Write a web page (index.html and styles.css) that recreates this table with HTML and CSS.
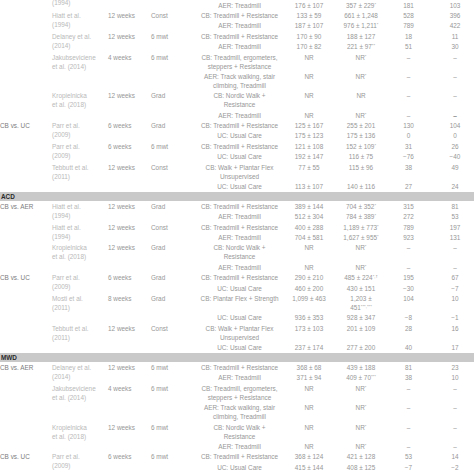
FILE: index.html
```html
<!DOCTYPE html>
<html>
<head>
<meta charset="utf-8">
<link rel="stylesheet" href="styles.css">
</head>
<body>
<div class="page">
<div class="t">
  <div class="cm"></div><div class="st0">(1994)</div><div></div><div></div><div class="tx">AER: Treadmill</div><div class="n">176 ± 107</div><div class="n">357 ± 229<sup>*</sup></div><div class="n">181</div><div class="n">103</div>

  <div class="cm"></div><div class="st">Hiatt et al.<br>(1994)</div><div class="du">12 weeks</div><div class="pr">Const</div><div class="tx">CB: Treadmill + Resistance</div><div class="n">133 ± 59</div><div class="n">661 ± 1,248</div><div class="n">528</div><div class="n">396</div>
  <div class="cm"></div><div class="tx">AER: Treadmill</div><div class="n">187 ± 107</div><div class="n">976 ± 1,211<sup>*</sup></div><div class="n">789</div><div class="n">422</div>

  <div class="cm"></div><div class="st">Delaney et al.<br>(2014)</div><div class="du">12 weeks</div><div class="pr">6 mwt</div><div class="tx">CB: Treadmill + Resistance</div><div class="n">170 ± 90</div><div class="n">188 ± 127</div><div class="n">18</div><div class="n">11</div>
  <div class="cm"></div><div class="tx">AER: Treadmill</div><div class="n">170 ± 82</div><div class="n">221 ± 97<sup>**</sup></div><div class="n">51</div><div class="n">30</div>

  <div class="cm"></div><div class="st">Jakubseviciene<br>et al. (2014)</div><div class="du">4 weeks</div><div class="pr">6 mwt</div><div class="tx">CB: Treadmill, ergometers,<br>steppers + Resistance</div><div class="n">NR</div><div class="n">NR<sup>*</sup></div><div class="n">–</div><div class="n">–</div>
  <div class="cm"></div><div class="tx">AER: Track walking, stair<br>climbing, Treadmill</div><div class="n">NR</div><div class="n">NR<sup>*</sup></div><div class="n">–</div><div class="n">–</div>

  <div class="cm"></div><div class="st">Kropielnicka<br>et al. (2018)</div><div class="du">12 weeks</div><div class="pr">Grad</div><div class="tx">CB: Nordic Walk +<br>Resistance</div><div class="n">NR</div><div class="n">NR</div><div class="n">–</div><div class="n">–</div>
  <div class="cm"></div><div class="tx">AER: Treadmill</div><div class="n">NR</div><div class="n">NR<sup>*</sup></div><div class="n">–</div><div class="n dk">–</div>

  <div class="cm">CB vs. UC</div><div class="st">Parr et al.<br>(2009)</div><div class="du">6 weeks</div><div class="pr">Grad</div><div class="tx">CB: Treadmill + Resistance</div><div class="n">125 ± 167</div><div class="n">255 ± 201</div><div class="n">130</div><div class="n">104</div>
  <div class="cm"></div><div class="tx">UC: Usual Care</div><div class="n">175 ± 123</div><div class="n">175 ± 136</div><div class="n">0</div><div class="n">0</div>

  <div class="cm"></div><div class="st">Parr et al.<br>(2009)</div><div class="du">6 weeks</div><div class="pr">6 mwt</div><div class="tx">CB: Treadmill + Resistance</div><div class="n">121 ± 108</div><div class="n">152 ± 109<sup>*</sup></div><div class="n">31</div><div class="n">26</div>
  <div class="cm"></div><div class="tx">UC: Usual Care</div><div class="n">192 ± 147</div><div class="n">116 ± 75</div><div class="n">−76</div><div class="n">−40</div>

  <div class="cm"></div><div class="st">Tebbutt et al.<br>(2011)</div><div class="du">12 weeks</div><div class="pr">Const</div><div class="tx">CB: Walk + Plantar Flex<br>Unsupervised</div><div class="n">77 ± 55</div><div class="n">115 ± 96</div><div class="n">38</div><div class="n">49</div>
  <div class="cm"></div><div class="tx">UC: Usual Care</div><div class="n">113 ± 107</div><div class="n">140 ± 116</div><div class="n">27</div><div class="n">24</div>

  <div class="sec">ACD</div>

  <div class="cm">CB vs. AER</div><div class="st">Hiatt et al.<br>(1994)</div><div class="du">12 weeks</div><div class="pr">Grad</div><div class="tx">CB: Treadmill + Resistance</div><div class="n">389 ± 144</div><div class="n">704 ± 352<sup>*</sup></div><div class="n">315</div><div class="n">81</div>
  <div class="cm"></div><div class="tx">AER: Treadmill</div><div class="n">512 ± 304</div><div class="n">784 ± 389<sup>*</sup></div><div class="n">272</div><div class="n">53</div>

  <div class="cm"></div><div class="st">Hiatt et al.<br>(1994)</div><div class="du">12 weeks</div><div class="pr">Const</div><div class="tx">CB: Treadmill + Resistance</div><div class="n">400 ± 288</div><div class="n">1,189 ± 773<sup>*</sup></div><div class="n">789</div><div class="n">197</div>
  <div class="cm"></div><div class="tx">AER: Treadmill</div><div class="n">704 ± 581</div><div class="n">1,627 ± 955<sup>*</sup></div><div class="n">923</div><div class="n">131</div>

  <div class="cm"></div><div class="st">Kropielnicka<br>et al. (2018)</div><div class="du">12 weeks</div><div class="pr">Grad</div><div class="tx">CB: Nordic Walk +<br>Resistance</div><div class="n">NR</div><div class="n">NR<sup>*</sup></div><div class="n">–</div><div class="n">–</div>
  <div class="cm"></div><div class="tx">AER: Treadmill</div><div class="n">NR</div><div class="n">NR<sup>*</sup></div><div class="n">–</div><div class="n">–</div>

  <div class="cm">CB vs. UC</div><div class="st">Parr et al.<br>(2009)</div><div class="du">6 weeks</div><div class="pr">Grad</div><div class="tx">CB: Treadmill + Resistance</div><div class="n">290 ± 210</div><div class="n">485 ± 224<sup>*,†</sup></div><div class="n">195</div><div class="n">67</div>
  <div class="cm"></div><div class="tx">UC: Usual Care</div><div class="n">460 ± 200</div><div class="n">430 ± 151</div><div class="n">−30</div><div class="n">−7</div>

  <div class="cm"></div><div class="st">Mosti et al.<br>(2011)</div><div class="du">8 weeks</div><div class="pr">Grad</div><div class="tx">CB: Plantar Flex + Strength</div><div class="n">1,099 ± 463</div><div class="n">1,203 ±<br>451<sup>***,***</sup></div><div class="n">104</div><div class="n">10</div>
  <div class="cm"></div><div class="tx">UC: Usual Care</div><div class="n">936 ± 353</div><div class="n">928 ± 347</div><div class="n">−8</div><div class="n">−1</div>

  <div class="cm"></div><div class="st">Tebbutt et al.<br>(2011)</div><div class="du">12 weeks</div><div class="pr">Const</div><div class="tx">CB: Walk + Plantar Flex<br>Unsupervised</div><div class="n">173 ± 103</div><div class="n">201 ± 109</div><div class="n">28</div><div class="n">16</div>
  <div class="cm"></div><div class="tx">UC: Usual Care</div><div class="n">237 ± 174</div><div class="n">277 ± 200</div><div class="n">40</div><div class="n">17</div>

  <div class="sec">MWD</div>

  <div class="cm">CB vs. AER</div><div class="st">Delaney et al.<br>(2014)</div><div class="du">12 weeks</div><div class="pr">6 mwt</div><div class="tx">CB: Treadmill + Resistance</div><div class="n">368 ± 68</div><div class="n">439 ± 188</div><div class="n">81</div><div class="n">23</div>
  <div class="cm"></div><div class="tx">AER: Treadmill</div><div class="n">371 ± 94</div><div class="n">409 ± 70<sup>***</sup></div><div class="n">38</div><div class="n">10</div>

  <div class="cm"></div><div class="st">Jakubseviciene<br>et al. (2014)</div><div class="du">4 weeks</div><div class="pr">6 mwt</div><div class="tx">CB: Treadmill, ergometers,<br>steppers + Resistance</div><div class="n">NR</div><div class="n">NR<sup>*</sup></div><div class="n">–</div><div class="n">–</div>
  <div class="cm"></div><div class="tx">AER: Track walking, stair<br>climbing, Treadmill</div><div class="n">NR</div><div class="n">NR<sup>*</sup></div><div class="n">–</div><div class="n">–</div>

  <div class="cm"></div><div class="st">Kropielnicka<br>et al. (2018)</div><div class="du">12 weeks</div><div class="pr">6 mwt</div><div class="tx">CB: Nordic Walk +<br>Resistance</div><div class="n">NR</div><div class="n">NR<sup>*</sup></div><div class="n">–</div><div class="n">–</div>
  <div class="cm"></div><div class="tx">AER: Treadmill</div><div class="n">NR</div><div class="n">NR<sup>*</sup></div><div class="n">–</div><div class="n">–</div>

  <div class="cm">CB vs. UC</div><div class="st">Parr et al.<br>(2009)</div><div class="du">6 weeks</div><div class="pr">6 mwt</div><div class="tx">CB: Treadmill + Resistance</div><div class="n">368 ± 124</div><div class="n">421 ± 128</div><div class="n">53</div><div class="n">14</div>
  <div class="cm"></div><div class="tx">UC: Usual Care</div><div class="n">415 ± 144</div><div class="n">408 ± 125</div><div class="n">−7</div><div class="n">−2</div>
</div>
</div>
</body>
</html>
```

FILE: styles.css
```css
html, body {
  margin: 0;
  padding: 0;
  background: #ffffff;
  overflow: hidden;
}

.page {
  width: 474px;
  height: 474px;
  overflow: hidden;
}

.t {
  display: grid;
  grid-template-columns: 52px 56px 43px 45px 87px 52px 52px 43px 50px;
  width: 480px;
  font-family: "Liberation Sans", Arial, sans-serif;
  font-size: 6.4px;
  line-height: 9px;
  color: #979797;
}

.t > div {
  padding: 0.7px 0;
  white-space: nowrap;
}

.cm {
  color: #7c7c7c;
}

.st {
  grid-row: span 2;
  color: #b9b9b9;
}

.t > .st0 {
  color: #b9b9b9;
  padding: 0;
  line-height: 6px;
}

.du,
.pr {
  grid-row: span 2;
}

.tx,
.n {
  text-align: center;
}

.dk {
  color: #555555;
}

.t sup {
  font-size: 4.2px;
  line-height: 0;
  vertical-align: 2px;
}

.t > .sec {
  grid-column: 1 / -1;
  background: #c9c9c9;
  color: #2a2a2a;
  font-weight: bold;
  height: 9.6px;
  line-height: 9.6px;
  padding: 0 0 0 1px;
}
```
